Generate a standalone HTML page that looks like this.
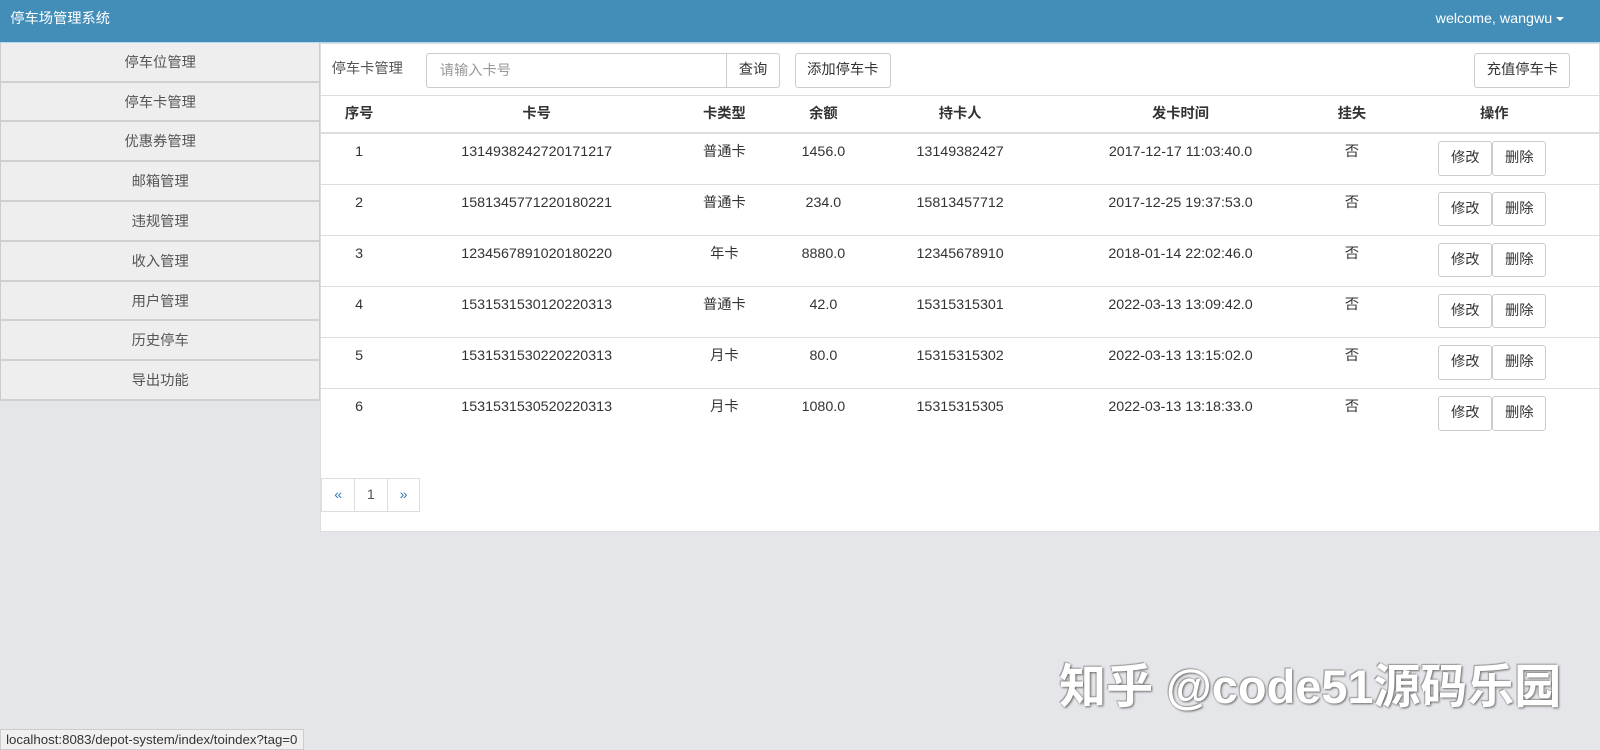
<!DOCTYPE html>
<html><head><meta charset="utf-8"><style>
*{box-sizing:border-box;margin:0;padding:0}
html,body{width:1600px;height:750px;overflow:hidden}
body{background:#e5e6ea;font-family:"Liberation Sans","Noto Sans CJK SC",sans-serif;font-size:14px;line-height:20px;color:#333}
#w{width:1568px;height:735px;position:relative;zoom:1.0204}
.hd{position:absolute;left:0;top:0;width:1568px;height:42px;background:#438eb9;border-bottom:1px solid #b8d6ea;color:#fff}
.hd .t{position:absolute;left:10px;top:9px;font-size:14px}
.hd .u{position:absolute;right:35px;top:9px;font-size:14px}
.car{display:inline-block;border-left:4px solid transparent;border-right:4px solid transparent;border-top:4px solid #fff;vertical-align:middle;margin-left:4px}
.sb{position:absolute;left:0;top:42px;width:314px}
.sb div{height:39px;background:#eee;border:1px solid #ccc;border-top:none;border-bottom:2px solid #d0d0d0;text-align:center;line-height:40px;color:#555}
.mp{position:absolute;left:314px;top:42px;width:1254px;height:479px;background:#fff;border:1px solid #ddd}
.ab{position:absolute}
.btn{position:absolute;border:1px solid #ccc;border-radius:3px;background:#fff;text-align:center;color:#333}
.inp{position:absolute;left:103px;top:9px;width:295px;height:34px;border:1px solid #ccc;border-radius:3px 0 0 3px;color:#999;padding:7px 12px}
table{position:absolute;left:0;top:50px;width:1253px;border-collapse:collapse}
th{height:37px;border-top:1px solid #ddd;border-bottom:2px solid #ddd;font-weight:bold;text-align:center;line-height:20px;padding-bottom:0}
td{height:50px;border-bottom:1px solid #ddd;text-align:center;vertical-align:top;padding-top:8px;line-height:20px}
td:last-child{padding-top:7px}
.b{display:inline-block;width:53px;height:34px;border:1px solid #ccc;border-radius:3px;line-height:33px;margin-left:-4px}
.pg{position:absolute;left:0;top:425px;height:34px;display:flex}
.pg span{border:1px solid #ddd;margin-left:-1px;width:33px;line-height:32px;text-align:center;color:#337ab7}
.st{position:absolute;left:0;top:714px;height:21px;background:#f0f0f0;border:1px solid #ccc;font-size:13px;line-height:16px;padding:2px 5px;color:#333}
.wm{position:absolute;left:1038px;top:646px;font-size:46px;line-height:56px;color:#fff;font-weight:bold;text-shadow:1px 1px 2px #666,-1px -1px 1px #999}
</style></head><body><div id="w">
<div class="hd"><span class="t">停车场管理系统</span><span class="u">welcome, wangwu<span class="car"></span></span></div>
<div class="sb"><div>停车位管理</div><div>停车卡管理</div><div>优惠券管理</div><div>邮箱管理</div><div>违规管理</div><div>收入管理</div><div>用户管理</div><div>历史停车</div><div>导出功能</div></div>
<div class="mp">
<span class="ab" style="left:10px;top:15px;color:#555">停车卡管理</span>
<div class="inp">请输入卡号</div>
<div class="btn" style="left:397px;top:9px;width:52px;height:34px;line-height:33px;border-radius:0 3px 3px 0">查询</div>
<div class="btn" style="left:464px;top:9px;width:94px;height:34px;line-height:33px">添加停车卡</div>
<div class="btn" style="left:1130px;top:9px;width:94px;height:34px;line-height:33px">充值停车卡</div>
<table>
<tr><th style="width:74px">序号</th><th style="width:274px">卡号</th><th style="width:94px">卡类型</th><th style="width:100px">余额</th><th style="width:168px">持卡人</th><th style="width:264px">发卡时间</th><th style="width:72px">挂失</th><th>操作</th></tr>
<tr><td>1</td><td>1314938242720171217</td><td>普通卡</td><td>1456.0</td><td>13149382427</td><td>2017-12-17 11:03:40.0</td><td>否</td><td><span class="b">修改</span> <span class="b">删除</span></td></tr>
<tr><td>2</td><td>1581345771220180221</td><td>普通卡</td><td>234.0</td><td>15813457712</td><td>2017-12-25 19:37:53.0</td><td>否</td><td><span class="b">修改</span> <span class="b">删除</span></td></tr>
<tr><td>3</td><td>1234567891020180220</td><td>年卡</td><td>8880.0</td><td>12345678910</td><td>2018-01-14 22:02:46.0</td><td>否</td><td><span class="b">修改</span> <span class="b">删除</span></td></tr>
<tr><td>4</td><td>1531531530120220313</td><td>普通卡</td><td>42.0</td><td>15315315301</td><td>2022-03-13 13:09:42.0</td><td>否</td><td><span class="b">修改</span> <span class="b">删除</span></td></tr>
<tr><td>5</td><td>1531531530220220313</td><td>月卡</td><td>80.0</td><td>15315315302</td><td>2022-03-13 13:15:02.0</td><td>否</td><td><span class="b">修改</span> <span class="b">删除</span></td></tr>
<tr><td style="border:none">6</td><td style="border:none">1531531530520220313</td><td style="border:none">月卡</td><td style="border:none">1080.0</td><td style="border:none">15315315305</td><td style="border:none">2022-03-13 13:18:33.0</td><td style="border:none">否</td><td style="border:none"><span class="b">修改</span> <span class="b">删除</span></td></tr>
</table>
<div class="pg"><span style="margin-left:0">«</span><span style="color:#555">1</span><span>»</span></div>
</div>
<div class="st">localhost:8083/depot-system/index/toindex?tag=0</div>
<div class="wm">知乎 @code51源码乐园</div>
</div></body></html>
